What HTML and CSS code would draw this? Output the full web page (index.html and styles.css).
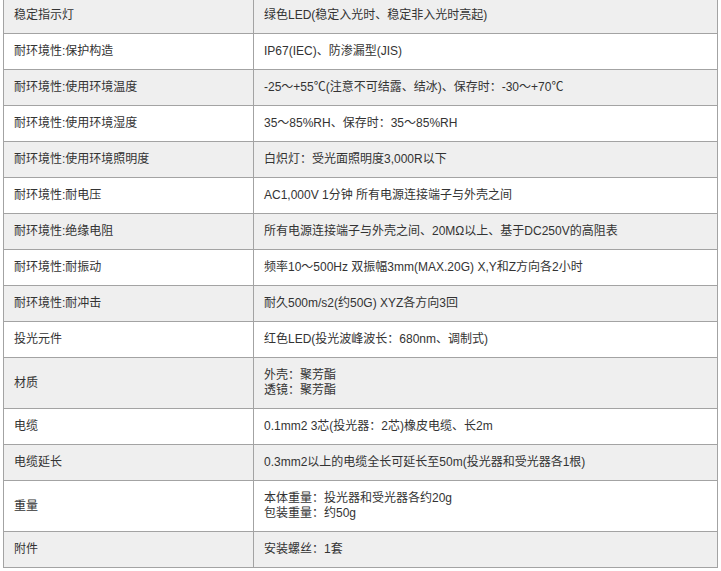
FILE: index.html
```html
<!DOCTYPE html>
<html lang="zh-CN">
<head>
<meta charset="utf-8">
<title>规格</title>
<link rel="stylesheet" href="styles.css">
</head>
<body>
<table class="spec">
<tbody>
<tr class="alt"><td class="k">稳定指示灯</td><td class="v">绿色LED(稳定入光时、稳定非入光时亮起)</td></tr>
<tr><td class="k">耐环境性:保护构造</td><td class="v">IP67(IEC)、防渗漏型(JIS)</td></tr>
<tr class="alt"><td class="k">耐环境性:使用环境温度</td><td class="v">-25～+55℃(注意不可结露、结冰)、保存时：-30～+70℃</td></tr>
<tr><td class="k">耐环境性:使用环境湿度</td><td class="v">35～85%RH、保存时：35～85%RH</td></tr>
<tr class="alt"><td class="k">耐环境性:使用环境照明度</td><td class="v">白炽灯：受光面照明度3,000R以下</td></tr>
<tr><td class="k">耐环境性:耐电压</td><td class="v">AC1,000V 1分钟 所有电源连接端子与外壳之间</td></tr>
<tr class="alt"><td class="k">耐环境性:绝缘电阻</td><td class="v">所有电源连接端子与外壳之间、20MΩ以上、基于DC250V的高阻表</td></tr>
<tr><td class="k">耐环境性:耐振动</td><td class="v">频率10～500Hz 双振幅3mm(MAX.20G) X,Y和Z方向各2小时</td></tr>
<tr class="alt"><td class="k">耐环境性:耐冲击</td><td class="v">耐久500m/s2(约50G) XYZ各方向3回</td></tr>
<tr><td class="k">投光元件</td><td class="v">红色LED(投光波峰波长：680nm、调制式)</td></tr>
<tr class="alt"><td class="k">材质</td><td class="v">外壳：聚芳酯<br>透镜：聚芳酯</td></tr>
<tr><td class="k">电缆</td><td class="v">0.1mm2 3芯(投光器：2芯)橡皮电缆、长2m</td></tr>
<tr class="alt"><td class="k">电缆延长</td><td class="v">0.3mm2以上的电缆全长可延长至50m(投光器和受光器各1根)</td></tr>
<tr><td class="k">重量</td><td class="v">本体重量：投光器和受光器各约20g<br>包装重量：约50g</td></tr>
<tr class="alt"><td class="k">附件</td><td class="v">安装螺丝：1套</td></tr>
</tbody>
</table>
</body>
</html>
```
FILE: styles.css
```css
html, body {
  margin: 0;
  padding: 0;
  background: #ffffff;
}
body {
  font-family: "Liberation Sans", "Noto Sans CJK SC", sans-serif;
  font-size: 12px;
  color: #333333;
}
.spec {
  border-collapse: collapse;
  width: 715px;
  margin: -3px 0 0 3px;
  table-layout: fixed;
}
.spec td {
  border: 1px solid #a3a3a3;
  padding: 10px 10px;
  line-height: 15px;
  vertical-align: middle;
  text-align: left;
}
.spec td.k {
  width: 229px;
}
.spec tr.alt td {
  background: #efefef;
}
```
